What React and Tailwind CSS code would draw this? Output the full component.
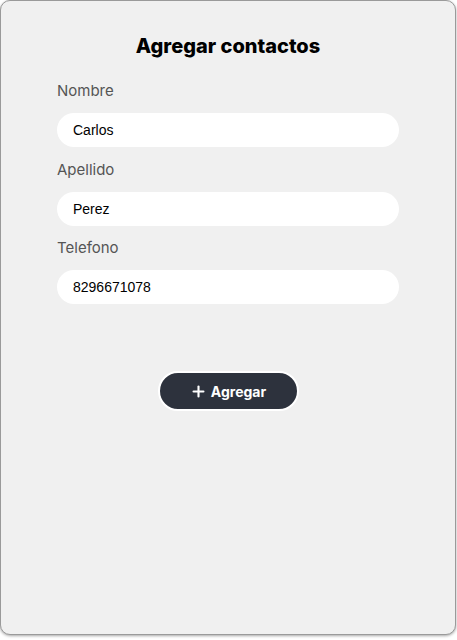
import React, { useState } from 'react';
import { Plus } from 'lucide-react';

const labelFont = { fontFamily: 'Inter, "Open Sans", sans-serif' };

const Field = ({ label, value, onChange, className }) => (
  <div className={className}>
    <label className="block text-[15px] leading-[22px] text-[#555]" style={labelFont}>
      {label}
    </label>
    <input
      type="text"
      value={value}
      onChange={(e) => onChange(e.target.value)}
      className="mt-[11px] block h-[34px] w-full rounded-full bg-white px-4 text-[14px] text-black outline-none"
      style={{ fontFamily: '"Liberation Sans", Arial, sans-serif' }}
    />
  </div>
);

export default function App() {
  const [nombre, setNombre] = useState('Carlos');
  const [apellido, setApellido] = useState('Perez');
  const [telefono, setTelefono] = useState('8296671078');

  return (
    <div className="min-h-screen bg-white">
      <div className="flex h-[635px] w-[456px] flex-col items-center rounded-[10px] border border-[#9a9a9a] bg-[#f0f0f0] pt-[31px] shadow-[0_1px_3px_rgba(0,0,0,0.35)]">
        <h1 className="text-[20px] font-extrabold leading-7 text-black" style={labelFont}>
          Agregar contactos
        </h1>

        {/* Form */}
        <div className="w-[342px]">
          <Field label="Nombre" value={nombre} onChange={setNombre} className="mt-5" />
          <Field label="Apellido" value={apellido} onChange={setApellido} className="mt-3" />
          <Field label="Telefono" value={telefono} onChange={setTelefono} className="mt-[11px]" />
        </div>

        <button
          className="mt-[67px] flex h-[40px] w-[141px] items-center justify-center gap-1 rounded-full border-2 border-white bg-[#2d323d] text-[14px] font-bold text-white"
          style={labelFont}
        >
          <Plus className="h-[17px] w-[17px]" strokeWidth={3} />
          Agregar
        </button>
      </div>
    </div>
  );
}
